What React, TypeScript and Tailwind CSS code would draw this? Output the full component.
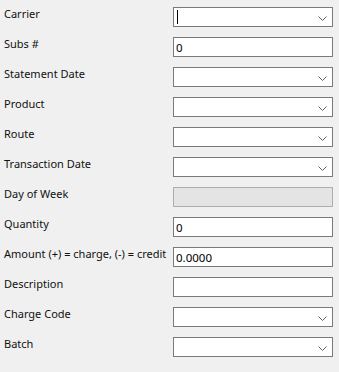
import React from 'react';

type Field = {
  label: string;
  kind: 'combo' | 'text' | 'disabled';
  value?: string;
  caret?: boolean;
};

const fields: Field[] = [
  { label: 'Carrier', kind: 'combo', caret: true },
  { label: 'Subs #', kind: 'text', value: '0' },
  { label: 'Statement Date', kind: 'combo' },
  { label: 'Product', kind: 'combo' },
  { label: 'Route', kind: 'combo' },
  { label: 'Transaction Date', kind: 'combo' },
  { label: 'Day of Week', kind: 'disabled' },
  { label: 'Quantity', kind: 'text', value: '0' },
  { label: 'Amount (+) = charge, (-) = credit', kind: 'text', value: '0.0000' },
  { label: 'Description', kind: 'text' },
  { label: 'Charge Code', kind: 'combo' },
  { label: 'Batch', kind: 'combo' },
];

const Chevron = () => (
  <svg width="9" height="5" viewBox="0 0 9 5" className="absolute right-[5px] top-[8px]">
    <path d="M0.5 0.5 L4.5 4.5 L8.5 0.5" fill="none" stroke="#606060" strokeWidth="1" />
  </svg>
);

const Box = ({ f }: { f: Field }) => {
  const base = 'relative w-[160px] h-[20px] border flex items-center pl-[2px] text-[11.5px] text-black';
  if (f.kind === 'disabled') {
    return <div className={`${base} bg-[#e4e4e4] border-[#adadad]`} />;
  }
  return (
    <div className={`${base} bg-white border-[#7a7a7a]`}>
      {f.caret && <span className="w-[1px] h-[14px] bg-black ml-[1px]" />}
      {f.value && <span className="leading-none mt-[1px]">{f.value}</span>}
      {f.kind === 'combo' && <Chevron />}
    </div>
  );
};

export default function App() {
  return (
    <div
      className="w-[339px] h-[372px] bg-[#f0f0f0] pt-[7px] flex flex-col gap-[10px]"
      style={{ fontFamily: '"Noto Sans", "DejaVu Sans", sans-serif' }}
    >
      {fields.map(f => (
        <div key={f.label} className="flex h-[20px]">
          <div className="w-[173px] pl-[4px] text-[11px] leading-[14px] text-[#111] whitespace-nowrap">
            {f.label}
          </div>
          <Box f={f} />
        </div>
      ))}
    </div>
  );
}
